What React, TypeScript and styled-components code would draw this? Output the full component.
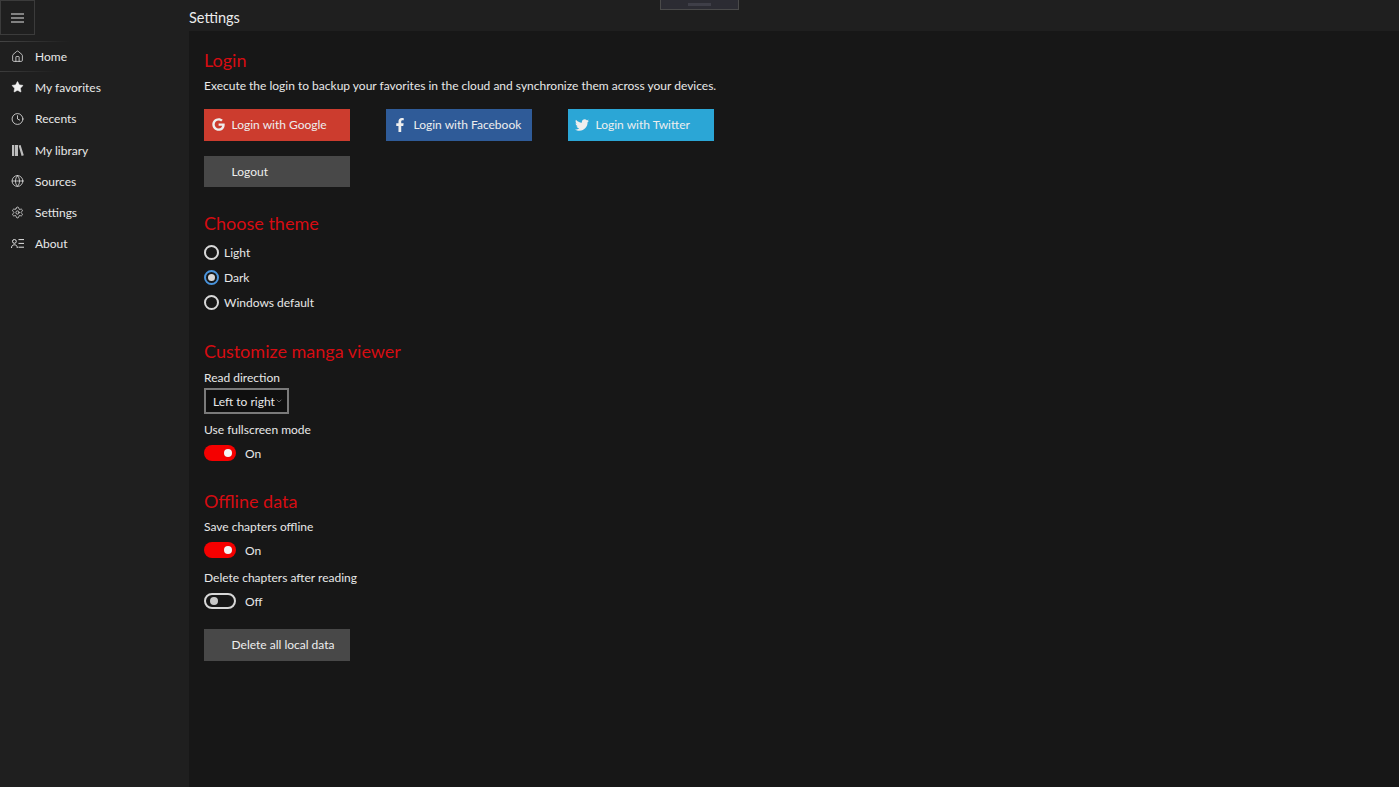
import React from "react";
import styled, { createGlobalStyle } from "styled-components";
import { Home, Star, Clock, Globe, Settings as Gear, ChevronDown } from "lucide-react";
import { FaFacebookF, FaGoogle, FaTwitter } from "react-icons/fa";

const Global = createGlobalStyle`
  html, body { margin: 0; height: 100%; background: #171717; overflow: hidden; }
  #root { height: 100%; }
  * { box-sizing: border-box; }
`;

const Shell = styled.div`
  display: flex;
  width: 1399px;
  height: 787px;
  font-family: "Lato", "Noto Sans", sans-serif;
  font-size: 12px;
  color: #e8e8e8;
  position: relative;
  white-space: nowrap;
`;
const Sidebar = styled.nav`
  width: 189px;
  flex: none;
  background: #1f1f1f;
  display: flex;
  flex-direction: column;
`;
const MenuButton = styled.div`
  width: 35px;
  height: 35px;
  border: 1px solid #3b3b3b;
  display: flex;
  align-items: center;
  justify-content: center;
  margin-bottom: 6px;
`;
const NavItem = styled.div<{ $active?: boolean }>`
  height: 31.3px;
  display: flex;
  align-items: center;
  gap: 11px;
  padding-left: 11px;
  position: relative;
  line-height: 16px;
  ${(p) =>
    p.$active
      ? `
    &::before { content: ""; position: absolute; left: 0; top: 0; width: 70px; height: 1px; background: linear-gradient(90deg, #444, transparent); }
    &::after { content: ""; position: absolute; left: 0; bottom: 0; width: 56px; height: 1px; background: linear-gradient(90deg, #3c3c3c, transparent); }
  `
      : ""}
`;
const NavIcon = styled.span`
  width: 13px;
  height: 14px;
  display: flex;
  align-items: center;
  justify-content: center;
  flex: none;
  margin-top: -1px;
`;
const Column = styled.div`
  flex: 1;
  display: flex;
  flex-direction: column;
`;
const Header = styled.header`
  height: 31px;
  background: #1f1f1f;
  display: flex;
  align-items: center;
  padding-top: 3px;
  font-size: 14.5px;
  color: #ececec;
`;
const Content = styled.main`
  flex: 1;
  padding: 17px 15px 0;
`;
const Heading = styled.h2<{ $top?: number }>`
  margin: ${(p) => p.$top ?? 0}px 0 0;
  font-size: 18px;
  font-weight: 400;
  line-height: 24px;
  color: #d60c12;
`;
const Desc = styled.p`
  margin: 6px 0 0;
  line-height: 16px;
`;
const ButtonRow = styled.div`
  display: flex;
  gap: 36px;
  margin-top: 15px;
`;
const ActionButton = styled.div<{ $bg: string; $top?: number }>`
  width: 146px;
  height: 31.5px;
  margin-top: ${(p) => p.$top ?? 0}px;
  background: ${(p) => p.$bg};
  display: flex;
  align-items: center;
  padding-left: 7px;
  color: #eee;
`;
const ButtonIcon = styled.span`
  width: 14px;
  height: 16px;
  margin-right: 6.5px;
  display: flex;
  align-items: center;
  justify-content: center;
  flex: none;
`;
const RadioList = styled.div`
  display: flex;
  flex-direction: column;
  gap: 5px;
  margin-top: 7px;
`;
const RadioRow = styled.div`
  height: 20px;
  display: flex;
  align-items: center;
  gap: 5px;
`;
const Radio = styled.span<{ $on?: boolean }>`
  width: 15px;
  height: 15px;
  border-radius: 50%;
  border: 2px solid ${(p) => (p.$on ? "#4a94dc" : "#d8d8d8")};
  display: flex;
  align-items: center;
  justify-content: center;
  &::after {
    content: "";
    display: ${(p) => (p.$on ? "block" : "none")};
    width: 7px;
    height: 7px;
    border-radius: 50%;
    background: #d8d8d8;
  }
`;
const FieldLabel = styled.div<{ $top: number }>`
  margin-top: ${(p) => p.$top}px;
  line-height: 16px;
`;
const Combo = styled.div`
  width: 85px;
  height: 26px;
  margin-top: 2px;
  border: 2px solid #7a7a7a;
  background: #0f0f0f;
  display: flex;
  align-items: center;
  justify-content: space-between;
  padding: 0 4px 0 7px;
`;
const ToggleRow = styled.div`
  display: flex;
  align-items: center;
  gap: 9px;
  height: 16px;
  margin-top: 7px;
`;
const Track = styled.span<{ $on?: boolean }>`
  width: 32px;
  height: 16px;
  border-radius: 8px;
  display: flex;
  align-items: center;
  padding: 0 4px;
  justify-content: ${(p) => (p.$on ? "flex-end" : "flex-start")};
  background: ${(p) => (p.$on ? "#f50000" : "transparent")};
  border: ${(p) => (p.$on ? "none" : "2px solid #d8d8d8")};
  &::after {
    content: "";
    width: 8px;
    height: 8px;
    border-radius: 50%;
    background: ${(p) => (p.$on ? "#f4f4f4" : "#c8c8c8")};
  }
`;
const TopTab = styled.div`
  position: absolute;
  left: 660px;
  top: 0;
  width: 79px;
  height: 10px;
  background: #2c2c33;
  border: 1px solid #4a4a4a;
  border-top: none;
  display: flex;
  justify-content: center;
  padding-top: 3px;
  &::after {
    content: "";
    width: 23px;
    height: 3px;
    background: #3f3f48;
  }
`;

const BurgerIcon = () => (
  <svg width="13" height="10" viewBox="0 0 13 10" stroke="#e4e4e4" strokeWidth="1.1">
    <path d="M0 1h13M0 5h13M0 9h13" />
  </svg>
);
const LibraryIcon = () => (
  <svg width="12" height="11" viewBox="0 0 12 11" fill="#bdbdbd">
    <path d="M0 0h2.3v11H0zM3 0h3v11H3zM6.6 .5 8.6 0l3.2 10.3-2.2.7z" />
  </svg>
);
const AboutIcon = () => (
  <svg width="13" height="9" viewBox="0 0 13 9" fill="none" stroke="#e4e4e4" strokeWidth="1">
    <circle cx="3.4" cy="2.4" r="1.9" />
    <path d="M.5 9c0-2.2 1.2-3.2 2.9-3.2s2.9 1 2.9 3.2M7.5.6H13M7.5 4.4H13M7.5 8.2H13" />
  </svg>
);

const nav = [
  { label: "Home", icon: <Home size={15} strokeWidth={1.4} />, active: true },
  { label: "My favorites", icon: <Star size={14} fill="#f2f2f2" strokeWidth={1} /> },
  { label: "Recents", icon: <Clock size={14} strokeWidth={1.5} /> },
  { label: "My library", icon: <LibraryIcon /> },
  { label: "Sources", icon: <Globe size={14} strokeWidth={1.4} /> },
  { label: "Settings", icon: <Gear size={15} strokeWidth={1.4} /> },
  { label: "About", icon: <AboutIcon /> },
];

export default function App() {
  return (
    <Shell>
      <Global />
      <Sidebar>
        <MenuButton>
          <BurgerIcon />
        </MenuButton>
        {nav.map((n) => (
          <NavItem key={n.label} $active={n.active}>
            <NavIcon>{n.icon}</NavIcon>
            {n.label}
          </NavItem>
        ))}
      </Sidebar>
      <Column>
        <Header>Settings</Header>
        <Content>
          <Heading>Login</Heading>
          <Desc>Execute the login to backup your favorites in the cloud and synchronize them across your devices.</Desc>
          <ButtonRow>
            <ActionButton $bg="#cc3c2e">
              <ButtonIcon><FaGoogle size={13} /></ButtonIcon>Login with Google
            </ActionButton>
            <ActionButton $bg="#2f5b98">
              <ButtonIcon><FaFacebookF size={14} /></ButtonIcon>Login with Facebook
            </ActionButton>
            <ActionButton $bg="#2ba6d6">
              <ButtonIcon><FaTwitter size={14} /></ButtonIcon>Login with Twitter
            </ActionButton>
          </ButtonRow>
          <ActionButton $bg="#484848" $top={15}>
            <ButtonIcon />Logout
          </ActionButton>
          <Heading $top={24}>Choose theme</Heading>
          <RadioList>
            <RadioRow><Radio />Light</RadioRow>
            <RadioRow><Radio $on />Dark</RadioRow>
            <RadioRow><Radio />Windows default</RadioRow>
          </RadioList>
          <Heading $top={27}>Customize manga viewer</Heading>
          <FieldLabel $top={7}>Read direction</FieldLabel>
          <Combo>Left to right<ChevronDown size={14} strokeWidth={1.2} /></Combo>
          <FieldLabel $top={8}>Use fullscreen mode</FieldLabel>
          <ToggleRow><Track $on />On</ToggleRow>
          <Heading $top={28}>Offline data</Heading>
          <FieldLabel $top={6}>Save chapters offline</FieldLabel>
          <ToggleRow><Track $on />On</ToggleRow>
          <FieldLabel $top={12}>Delete chapters after reading</FieldLabel>
          <ToggleRow><Track />Off</ToggleRow>
          <ActionButton $bg="#484848" $top={20}>
            <ButtonIcon />Delete all local data
          </ActionButton>
        </Content>
      </Column>
      <TopTab />
    </Shell>
  );
}
